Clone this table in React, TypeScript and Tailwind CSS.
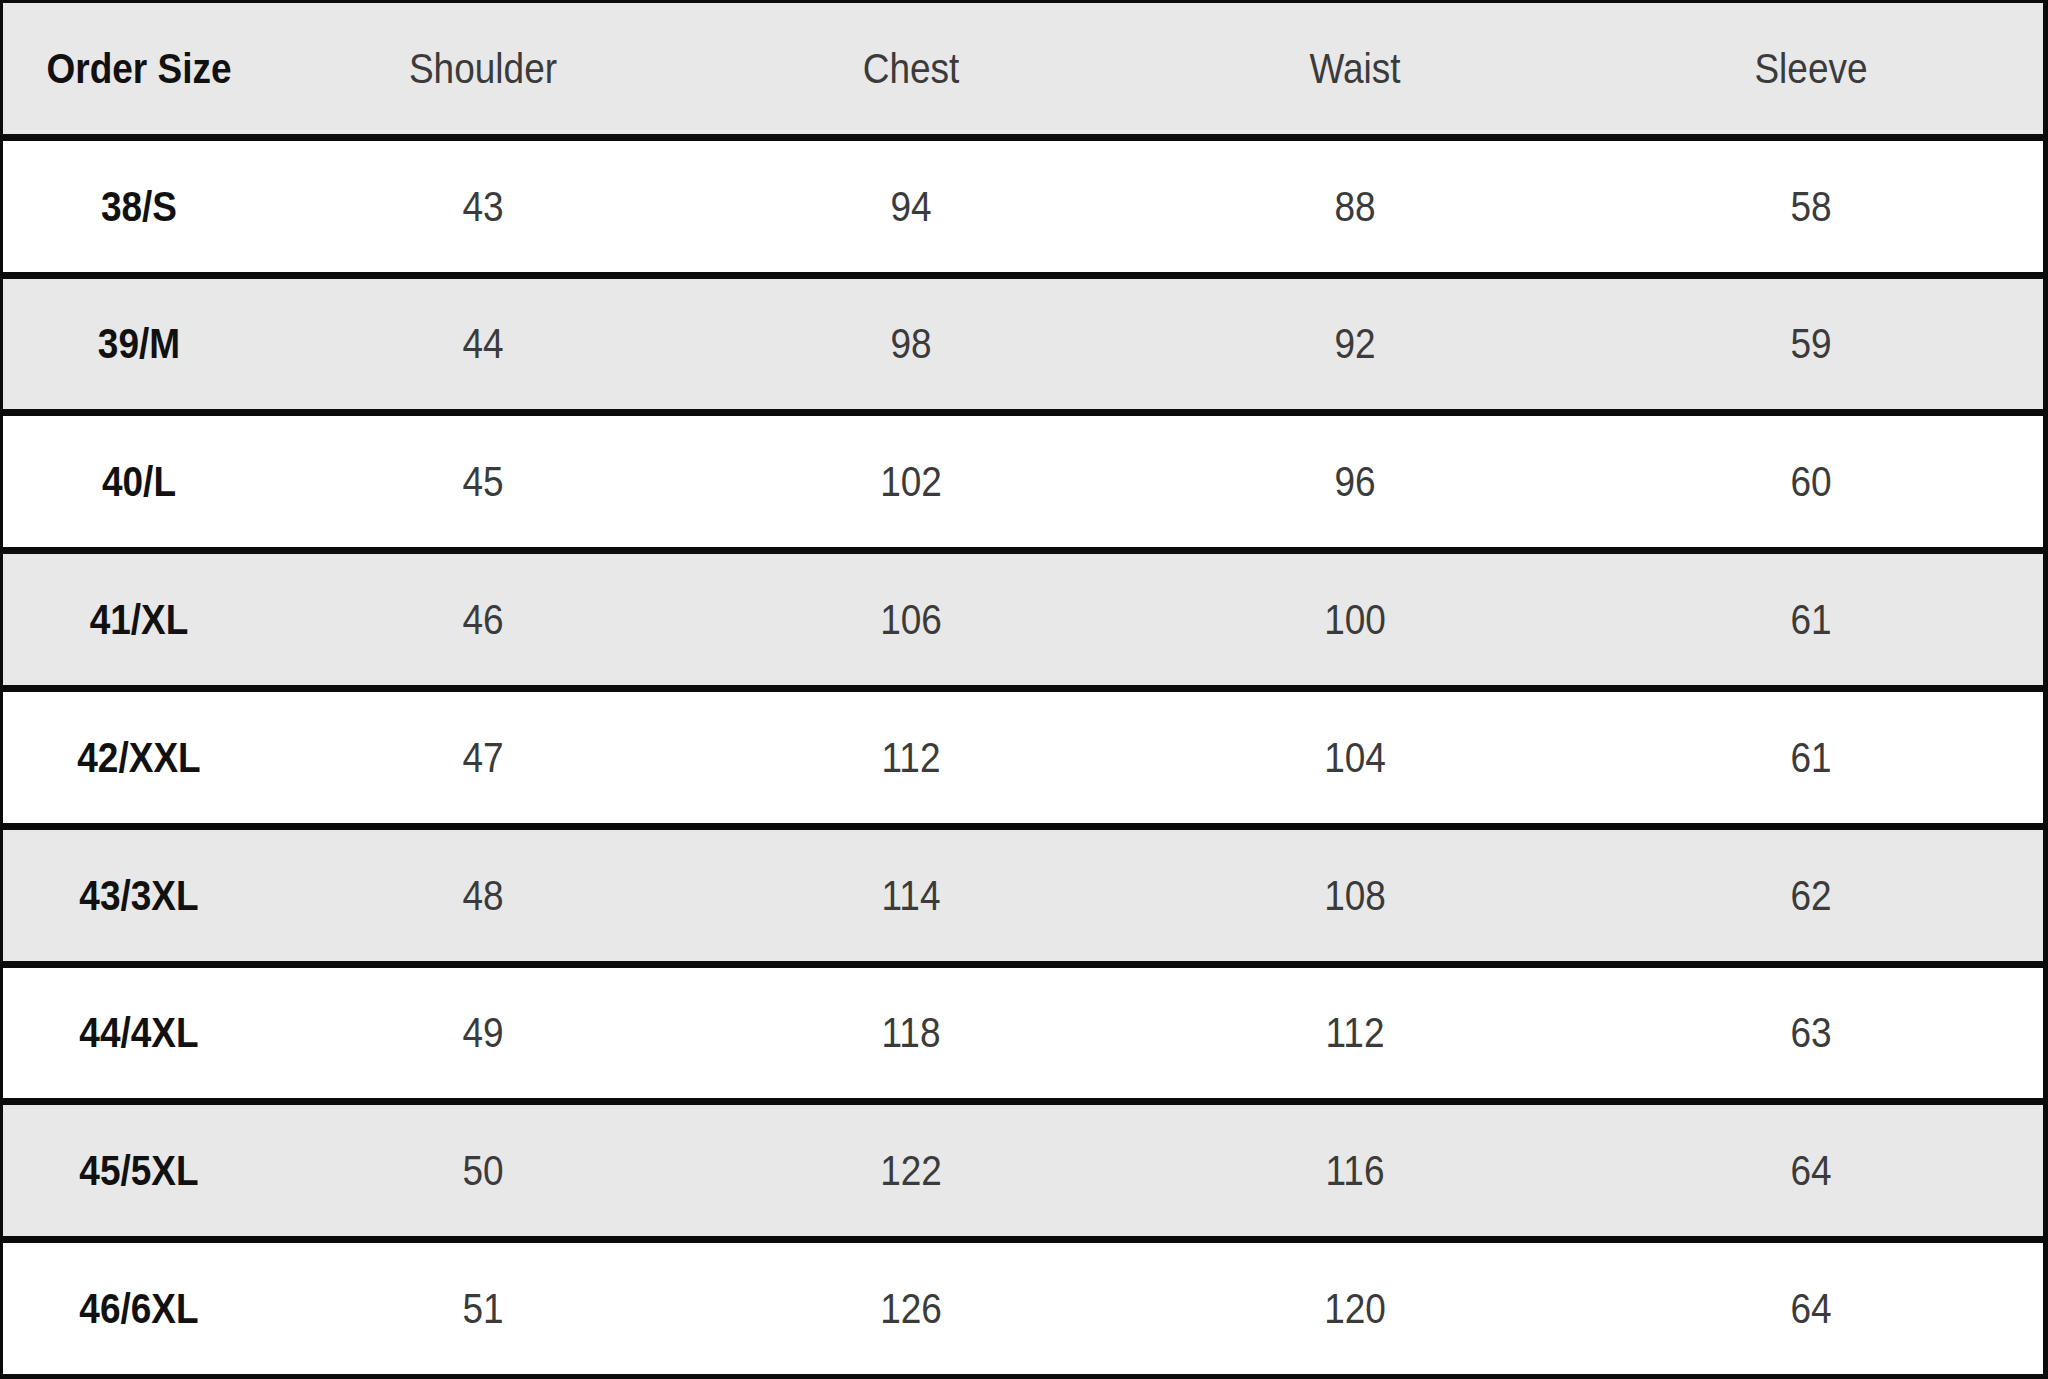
import React from "react";

const columns = ["Order Size", "Shoulder", "Chest", "Waist", "Sleeve"];

// size chart rows: [order size, shoulder, chest, waist, sleeve]
const rows: string[][] = [
  ["38/S", "43", "94", "88", "58"],
  ["39/M", "44", "98", "92", "59"],
  ["40/L", "45", "102", "96", "60"],
  ["41/XL", "46", "106", "100", "61"],
  ["42/XXL", "47", "112", "104", "61"],
  ["43/3XL", "48", "114", "108", "62"],
  ["44/4XL", "49", "118", "112", "63"],
  ["45/5XL", "50", "122", "116", "64"],
  ["46/6XL", "51", "126", "120", "64"],
];

const rowGrid = "grid grid-cols-[272px_416px_440px_448px_464px] items-center";

function Cell({ text, bold }: { text: string; bold: boolean }) {
  return (
    <div className="text-center">
      <span
        className={
          bold
            ? "inline-block scale-y-[1.15] font-bold text-[#111111]"
            : "inline-block scale-y-[1.15] text-[#3b3b3b]"
        }
      >
        {text}
      </span>
    </div>
  );
}

export default function App() {
  return (
    <div
      className="w-[2048px] h-[1379px] bg-[#0b0b0b] pt-[3px] pl-[3px] pr-[5px] pb-[5px] grid grid-rows-10 gap-y-[7px] text-[37px] leading-none"
      style={{ fontFamily: '"Liberation Sans", Arial, sans-serif' }}
    >
      {/* Header */}
      <div className={`${rowGrid} bg-[#e8e8e8]`}>
        {columns.map((col, i) => (
          <Cell key={col} text={col} bold={i === 0} />
        ))}
      </div>

      {rows.map((row, r) => (
        <div
          key={row[0]}
          className={`${rowGrid} ${r % 2 === 0 ? "bg-white" : "bg-[#e8e8e8]"}`}
        >
          {row.map((cell, i) => (
            <Cell key={i} text={cell} bold={i === 0} />
          ))}
        </div>
      ))}
    </div>
  );
}
